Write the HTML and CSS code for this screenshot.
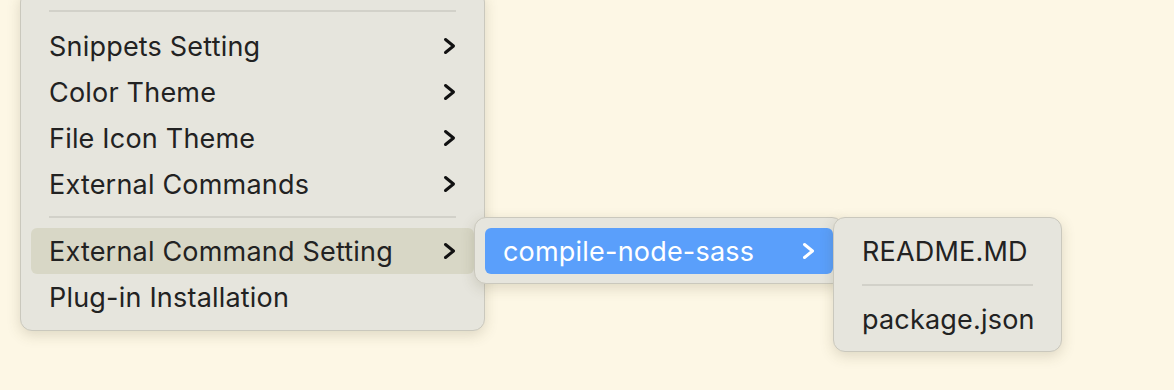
FILE: index.html
```html
<!DOCTYPE html>
<html lang="en">
<head>
  <meta charset="UTF-8">
  <title>Menu</title>
  <link rel="stylesheet" href="styles.css">
</head>
<body>

  <div class="menu main-menu">
    <div class="sep sep-top"></div>
    <div class="item">Snippets Setting <svg class="chev" viewBox="0 0 13 18"><polyline points="2.5,2.5 10.5,9 2.5,15.5"/></svg></div>
    <div class="item">Color Theme <svg class="chev" viewBox="0 0 13 18"><polyline points="2.5,2.5 10.5,9 2.5,15.5"/></svg></div>
    <div class="item">File Icon Theme <svg class="chev" viewBox="0 0 13 18"><polyline points="2.5,2.5 10.5,9 2.5,15.5"/></svg></div>
    <div class="item">External Commands <svg class="chev" viewBox="0 0 13 18"><polyline points="2.5,2.5 10.5,9 2.5,15.5"/></svg></div>
    <div class="sep"></div>
    <div class="item open">External Command Setting <svg class="chev" viewBox="0 0 13 18"><polyline points="2.5,2.5 10.5,9 2.5,15.5"/></svg></div>
    <div class="item">Plug-in Installation</div>
  </div>

  <div class="menu sub-menu">
    <div class="item selected">compile-node-sass <svg class="chev" viewBox="0 0 13 18"><polyline points="2.5,2.5 10.5,9 2.5,15.5"/></svg></div>
  </div>

  <div class="menu file-menu">
    <div class="item">README.MD</div>
    <div class="sep"></div>
    <div class="item">package.json</div>
  </div>

</body>
</html>
```

FILE: styles.css
```css
body {
  margin: 0;
  background: #fdf7e5;
  font-family: Inter, "Open Sans", sans-serif;
  color: #222;
  overflow: hidden;
}
.menu {
  position: absolute;
  box-sizing: border-box;
  padding: 10px;
  background: #e6e5dd;
  border: 1px solid #cac8bd;
  border-radius: 12px;
  box-shadow: 0 4px 14px rgba(80, 70, 40, 0.18);
}
.main-menu {
  left: 20px;
  top: -10px;
  width: 465px;
  height: 341px;
  padding-top: 9px;
}
.sub-menu {
  left: 474px;
  top: 217px;
  width: 370px;
  height: 67px;
}
.file-menu {
  left: 833px;
  top: 217px;
  width: 229px;
  height: 135px;
}
.item {
  display: flex;
  align-items: center;
  justify-content: space-between;
  height: 46px;
  padding: 0 18px;
  border-radius: 6px;
  font-size: 27px;
  letter-spacing: 0.2px;
}
.item.open {
  background: #d8d7c6;
}
.item.selected {
  background: #5a9ffb;
  color: #fff;
  padding-right: 18px;
}
.chev {
  width: 13px;
  height: 18px;
  fill: none;
  stroke: #111;
  stroke-width: 3;
  stroke-linecap: round;
  stroke-linejoin: round;
}
.selected .chev {
  stroke: #fff;
}
.sep {
  height: 2px;
  margin: 9px 18px 10px;
  background: #d2d1c9;
}
.sep-top {
  margin-top: 10px;
  margin-bottom: 11px;
}
.file-menu .sep {
  margin: 10px 18px;
}
```
